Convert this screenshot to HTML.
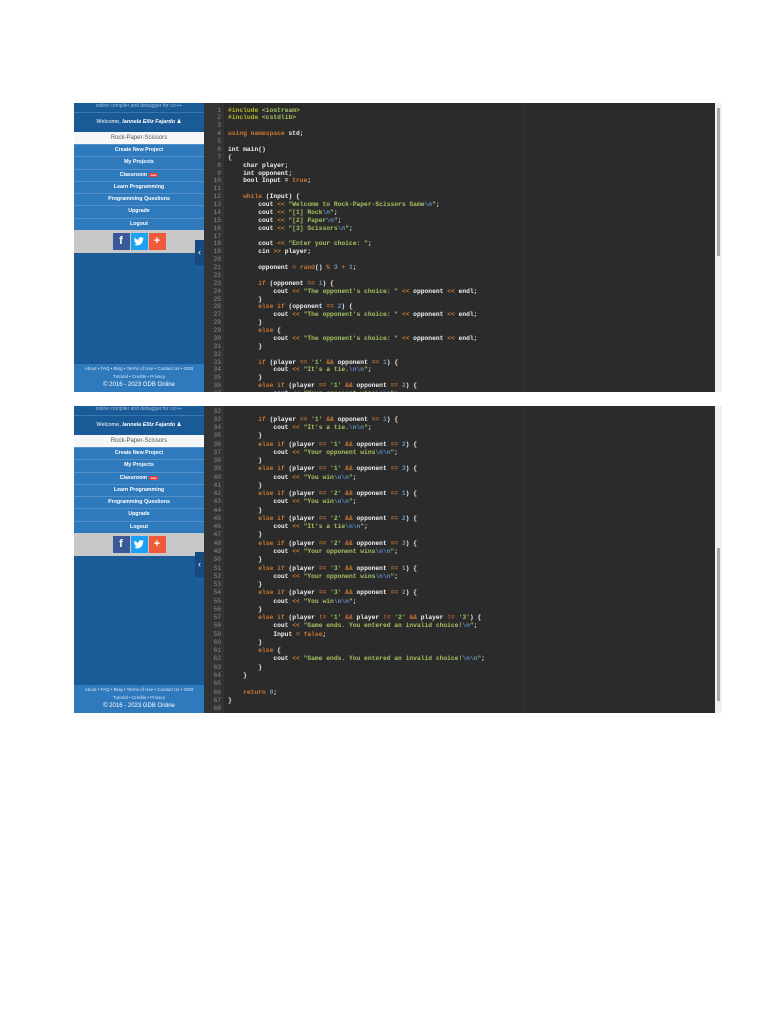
<!DOCTYPE html>
<html><head><meta charset="utf-8"><style>
body{margin:0;width:768px;height:1024px;background:#fff;position:relative;overflow:hidden;font-family:"Liberation Sans",sans-serif}
.panel{position:absolute;left:74px;width:648px;background:#2b2b2b;overflow:hidden}
.side{position:absolute;left:0;top:0;width:130px;bottom:0;background:#1b5b98}
.hdr{height:9px;background:#1a5a96;color:#9fc0e0;font-size:5px;text-align:center;line-height:6px}
.wel{height:19px;background:#1a5a96;color:#fff;font-size:5.5px;text-align:center;line-height:19px;border-top:1px solid #3a78b4}
.rps{height:12px;background:#f4f6f8;color:#555;font-size:6px;text-align:center;line-height:12px}
.mi{height:11.3px;background:#2f79bd;color:#fff;font-size:5.3px;font-weight:bold;text-align:center;line-height:11.3px;border-top:1px solid #5590c8}
.new{background:#e04040;color:#fff;font-size:3px;padding:0 2px}
.soc{height:23px;background:#c8c8c8;text-align:center;padding-top:3px;box-sizing:border-box}
.soc span{display:inline-block;width:17px;height:17px;color:#fff;font-weight:bold;font-size:11px;line-height:17px;margin:0 0.5px;vertical-align:top}
.soc svg{margin-top:4px}
.foot{position:absolute;bottom:0;left:0;width:130px;height:27px;background:#2f79bd;color:#d8e6f4;font-size:4.5px;text-align:center;line-height:8px;padding-top:1px}
.foot b{font-weight:normal;font-size:6px;color:#fff}
.arr{position:absolute;left:121px;width:9px;height:25px;background:#154b80;color:#fff;font-size:9px;line-height:25px;text-align:center}
.gut{position:absolute;left:130px;top:0;bottom:0;width:20px;background:#313335}
.pm{position:absolute;left:450px;top:0;bottom:0;width:1px;background:#353535}
.sb{position:absolute;left:641px;top:0;bottom:0;width:7px;background:#f0f0f0}
.th{position:absolute;left:643px;width:3px;background:#a8a8a8}
pre{position:absolute;left:130px;margin:0;font-family:"Liberation Mono",monospace;font-size:6.3px;color:#f0f0f0;font-weight:bold}
pre i{font-style:normal;font-weight:normal;display:inline-block;width:17px;text-align:right;color:#8a8a8a;margin-right:7px}
.k{color:#cc7832}.s{color:#a5c261}.n{color:#6897bb}.e{color:#5f8fc4}.p{color:#bbb529}
</style></head><body>

<div class="panel" style="top:103px;height:289px">
<div class="side">
<div class="hdr">online compiler and debugger for c/c++</div>
<div class="wel">Welcome, <b><i>Iannela Elliz Fajardo</i></b> ♟</div>
<div class="rps">Rock-Paper-Scissors</div>
<div class="mi">Create New Project</div><div class="mi">My Projects</div><div class="mi">Classroom <span class="new">new</span></div><div class="mi">Learn Programming</div><div class="mi">Programming Questions</div><div class="mi">Upgrade</div><div class="mi">Logout</div>
<div class="soc"><span style="background:#3b5998">f</span><span style="background:#1da1f2"><svg width="10" height="9" viewBox="0 0 10 9"><path d="M10 1.2c-.4.2-.8.3-1.2.3.4-.3.8-.7.9-1.1-.4.2-.9.4-1.3.5C8 .4 7.4.1 6.8.1 5.6.1 4.7 1 4.7 2.2c0 .2 0 .3.1.5C3 2.6 1.5 1.8.5.5.3.8.2 1.2.2 1.6c0 .7.4 1.4.9 1.7-.3 0-.7-.1-.9-.3 0 1 .7 1.9 1.7 2.1-.3.1-.6.1-1 0 .3.8 1 1.4 1.9 1.5C2.1 7.2 1.2 7.5.2 7.5H0c.9.6 2 .9 3.1.9 3.8 0 5.8-3.1 5.8-5.8v-.3c.4-.3.8-.7 1.1-1.1z" fill="#fff"/></svg></span><span style="background:#f05a3c">+</span></div>
<div class="foot">About • FAQ • Blog • Terms of Use • Contact Us • GDB<br>Tutorial • Credits • Privacy<br><b>© 2016 - 2023 GDB Online</b></div>
</div>
<div class="arr" style="top:137px">‹</div>
<div class="gut"></div><div class="pm"></div>
<div class="sb"></div><div class="th" style="top:5px;height:148px"></div>
<pre style="top:3.5px;line-height:7.88px"><i>1</i><span class="p">#include</span> <span class="s">&lt;iostream&gt;</span>
<i>2</i><span class="p">#include</span> <span class="s">&lt;cstdlib&gt;</span>
<i>3</i>
<i>4</i><span class="k">using namespace</span> std;
<i>5</i>
<i>6</i>int main()
<i>7</i>{
<i>8</i>    char player;
<i>9</i>    int opponent;
<i>10</i>    bool Input = <span class="k">true</span>;
<i>11</i>
<i>12</i>    <span class="k">while</span> (Input) {
<i>13</i>        cout <span class="k">&lt;&lt;</span> <span class="s">"Welcome to Rock-Paper-Scissors Game<span class="e">\n</span>"</span>;
<i>14</i>        cout <span class="k">&lt;&lt;</span> <span class="s">"[1] Rock<span class="e">\n</span>"</span>;
<i>15</i>        cout <span class="k">&lt;&lt;</span> <span class="s">"[2] Paper<span class="e">\n</span>"</span>;
<i>16</i>        cout <span class="k">&lt;&lt;</span> <span class="s">"[3] Scissors<span class="e">\n</span>"</span>;
<i>17</i>
<i>18</i>        cout <span class="k">&lt;&lt;</span> <span class="s">"Enter your choice: "</span>;
<i>19</i>        cin <span class="k">&gt;&gt;</span> player;
<i>20</i>
<i>21</i>        opponent <span class="k">=</span> <span class="k">rand</span>() <span class="k">%</span> <span class="n">3</span> <span class="k">+</span> <span class="n">1</span>;
<i>22</i>
<i>23</i>        <span class="k">if</span> (opponent <span class="k">==</span> <span class="n">1</span>) {
<i>24</i>            cout <span class="k">&lt;&lt;</span> <span class="s">"The opponent's choice: "</span> <span class="k">&lt;&lt;</span> opponent <span class="k">&lt;&lt;</span> endl;
<i>25</i>        }
<i>26</i>        <span class="k">else if</span> (opponent <span class="k">==</span> <span class="n">2</span>) {
<i>27</i>            cout <span class="k">&lt;&lt;</span> <span class="s">"The opponent's choice: "</span> <span class="k">&lt;&lt;</span> opponent <span class="k">&lt;&lt;</span> endl;
<i>28</i>        }
<i>29</i>        <span class="k">else</span> {
<i>30</i>            cout <span class="k">&lt;&lt;</span> <span class="s">"The opponent's choice: "</span> <span class="k">&lt;&lt;</span> opponent <span class="k">&lt;&lt;</span> endl;
<i>31</i>        }
<i>32</i>
<i>33</i>        <span class="k">if</span> (player <span class="k">==</span> <span class="s">'1'</span> <span class="k">&amp;&amp;</span> opponent <span class="k">==</span> <span class="n">1</span>) {
<i>34</i>            cout <span class="k">&lt;&lt;</span> <span class="s">"It's a tie.<span class="e">\n\n</span>"</span>;
<i>35</i>        }
<i>36</i>        <span class="k">else if</span> (player <span class="k">==</span> <span class="s">'1'</span> <span class="k">&amp;&amp;</span> opponent <span class="k">==</span> <span class="n">2</span>) {
<i>37</i>            cout <span class="k">&lt;&lt;</span> <span class="s">"Your opponent wins<span class="e">\n\n</span>"</span>;
</pre>
</div>

<div class="panel" style="top:406px;height:307px">
<div class="side">
<div class="hdr">online compiler and debugger for c/c++</div>
<div class="wel">Welcome, <b><i>Iannela Elliz Fajardo</i></b> ♟</div>
<div class="rps">Rock-Paper-Scissors</div>
<div class="mi">Create New Project</div><div class="mi">My Projects</div><div class="mi">Classroom <span class="new">new</span></div><div class="mi">Learn Programming</div><div class="mi">Programming Questions</div><div class="mi">Upgrade</div><div class="mi">Logout</div>
<div class="soc"><span style="background:#3b5998">f</span><span style="background:#1da1f2"><svg width="10" height="9" viewBox="0 0 10 9"><path d="M10 1.2c-.4.2-.8.3-1.2.3.4-.3.8-.7.9-1.1-.4.2-.9.4-1.3.5C8 .4 7.4.1 6.8.1 5.6.1 4.7 1 4.7 2.2c0 .2 0 .3.1.5C3 2.6 1.5 1.8.5.5.3.8.2 1.2.2 1.6c0 .7.4 1.4.9 1.7-.3 0-.7-.1-.9-.3 0 1 .7 1.9 1.7 2.1-.3.1-.6.1-1 0 .3.8 1 1.4 1.9 1.5C2.1 7.2 1.2 7.5.2 7.5H0c.9.6 2 .9 3.1.9 3.8 0 5.8-3.1 5.8-5.8v-.3c.4-.3.8-.7 1.1-1.1z" fill="#fff"/></svg></span><span style="background:#f05a3c">+</span></div>
<div class="foot">About • FAQ • Blog • Terms of Use • Contact Us • GDB<br>Tutorial • Credits • Privacy<br><b>© 2016 - 2023 GDB Online</b></div>
</div>
<div class="arr" style="top:146px">‹</div>
<div class="gut"></div><div class="pm"></div>
<div class="sb"></div><div class="th" style="top:142px;height:153px"></div>
<pre style="top:1.5px;line-height:8.26px"><i>32</i>
<i>33</i>        <span class="k">if</span> (player <span class="k">==</span> <span class="s">'1'</span> <span class="k">&amp;&amp;</span> opponent <span class="k">==</span> <span class="n">1</span>) {
<i>34</i>            cout <span class="k">&lt;&lt;</span> <span class="s">"It's a tie.<span class="e">\n\n</span>"</span>;
<i>35</i>        }
<i>36</i>        <span class="k">else if</span> (player <span class="k">==</span> <span class="s">'1'</span> <span class="k">&amp;&amp;</span> opponent <span class="k">==</span> <span class="n">2</span>) {
<i>37</i>            cout <span class="k">&lt;&lt;</span> <span class="s">"Your opponent wins<span class="e">\n\n</span>"</span>;
<i>38</i>        }
<i>39</i>        <span class="k">else if</span> (player <span class="k">==</span> <span class="s">'1'</span> <span class="k">&amp;&amp;</span> opponent <span class="k">==</span> <span class="n">3</span>) {
<i>40</i>            cout <span class="k">&lt;&lt;</span> <span class="s">"You win<span class="e">\n\n</span>"</span>;
<i>41</i>        }
<i>42</i>        <span class="k">else if</span> (player <span class="k">==</span> <span class="s">'2'</span> <span class="k">&amp;&amp;</span> opponent <span class="k">==</span> <span class="n">1</span>) {
<i>43</i>            cout <span class="k">&lt;&lt;</span> <span class="s">"You win<span class="e">\n\n</span>"</span>;
<i>44</i>        }
<i>45</i>        <span class="k">else if</span> (player <span class="k">==</span> <span class="s">'2'</span> <span class="k">&amp;&amp;</span> opponent <span class="k">==</span> <span class="n">2</span>) {
<i>46</i>            cout <span class="k">&lt;&lt;</span> <span class="s">"It's a tie<span class="e">\n\n</span>"</span>;
<i>47</i>        }
<i>48</i>        <span class="k">else if</span> (player <span class="k">==</span> <span class="s">'2'</span> <span class="k">&amp;&amp;</span> opponent <span class="k">==</span> <span class="n">3</span>) {
<i>49</i>            cout <span class="k">&lt;&lt;</span> <span class="s">"Your opponent wins<span class="e">\n\n</span>"</span>;
<i>50</i>        }
<i>51</i>        <span class="k">else if</span> (player <span class="k">==</span> <span class="s">'3'</span> <span class="k">&amp;&amp;</span> opponent <span class="k">==</span> <span class="n">1</span>) {
<i>52</i>            cout <span class="k">&lt;&lt;</span> <span class="s">"Your opponent wins<span class="e">\n\n</span>"</span>;
<i>53</i>        }
<i>54</i>        <span class="k">else if</span> (player <span class="k">==</span> <span class="s">'3'</span> <span class="k">&amp;&amp;</span> opponent <span class="k">==</span> <span class="n">2</span>) {
<i>55</i>            cout <span class="k">&lt;&lt;</span> <span class="s">"You win<span class="e">\n\n</span>"</span>;
<i>56</i>        }
<i>57</i>        <span class="k">else if</span> (player <span class="k">!=</span> <span class="s">'1'</span> <span class="k">&amp;&amp;</span> player <span class="k">!=</span> <span class="s">'2'</span> <span class="k">&amp;&amp;</span> player <span class="k">!=</span> <span class="s">'3'</span>) {
<i>58</i>            cout <span class="k">&lt;&lt;</span> <span class="s">"Game ends. You entered an invalid choice!<span class="e">\n</span>"</span>;
<i>59</i>            Input <span class="k">=</span> <span class="k">false</span>;
<i>60</i>        }
<i>61</i>        <span class="k">else</span> {
<i>62</i>            cout <span class="k">&lt;&lt;</span> <span class="s">"Game ends. You entered an invalid choice!<span class="e">\n\n</span>"</span>;
<i>63</i>        }
<i>64</i>    }
<i>65</i>
<i>66</i>    <span class="k">return</span> <span class="n">0</span>;
<i>67</i>}
<i>68</i>
</pre>
</div>
</body></html>
